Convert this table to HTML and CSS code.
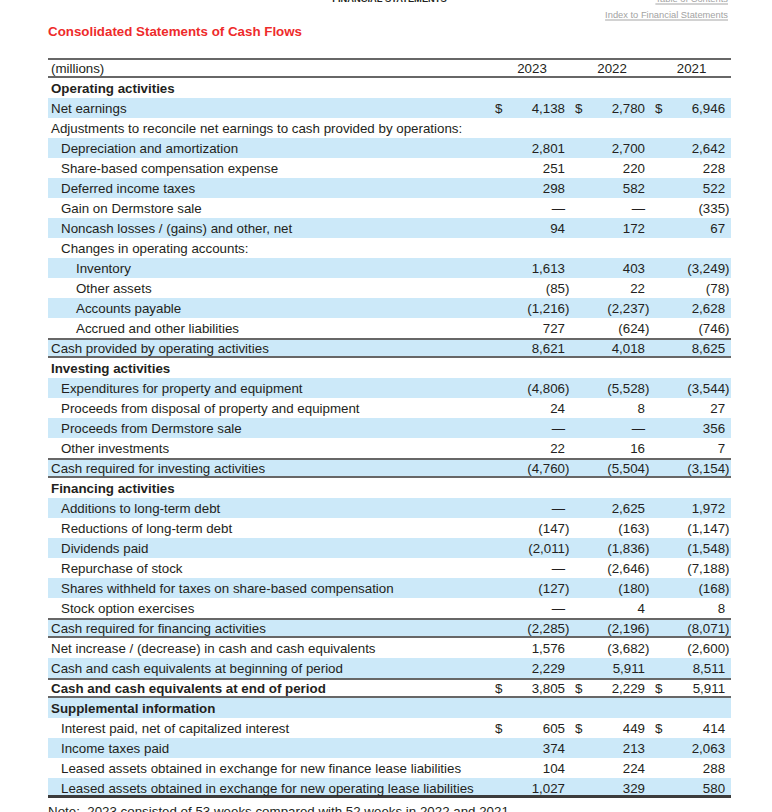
FILE: index.html
```html
<!DOCTYPE html>
<html lang="en">

<head>
  <meta charset="UTF-8">
  <meta name="viewport" content="width=device-width, initial-scale=1.0">
  <title>Consolidated Statements of Cash Flows</title>
  <link rel="stylesheet" href="styles.css">
</head>

<body>
  <div class="page">
    <!-- Running head with links back to the contents -->
    <header class="running-head">
      <div class="section-name">FINANCIAL STATEMENTS</div>
      <a class="doc-link toc-link" href="#">Table of Contents</a>
      <a class="doc-link index-link" href="#">Index to Financial Statements</a>
    </header>

    <h2 class="statement-title">Consolidated Statements of Cash Flows</h2>

    <table class="cash-flows">
      <colgroup>
        <col class="c-label">
        <col class="c-cur"><col class="c-num"><col class="c-par">
        <col class="c-cur"><col class="c-num"><col class="c-par">
        <col class="c-cur"><col class="c-num"><col class="c-par-last">
      </colgroup>
      <thead>
        <tr class="rule-both">
          <th class="lbl">(millions)</th>
          <th class="year" colspan="3">2023</th>
          <th class="year" colspan="3">2022</th>
          <th class="year" colspan="3">2021</th>
        </tr>
      </thead>
      <tbody>
        <!-- Operating activities -->
        <tr class="section">
          <td class="lbl">Operating activities</td>
          <td></td><td></td><td></td><td></td><td></td><td></td><td></td><td></td><td></td>
        </tr>
        <tr>
          <td class="lbl">Net earnings</td>
          <td class="cur">$</td><td class="num">4,138</td><td class="par"></td>
          <td class="cur">$</td><td class="num">2,780</td><td class="par"></td>
          <td class="cur">$</td><td class="num">6,946</td><td class="par"></td>
        </tr>
        <tr>
          <td class="lbl">Adjustments to reconcile net earnings to cash provided by operations:</td>
          <td></td><td></td><td></td><td></td><td></td><td></td><td></td><td></td><td></td>
        </tr>
        <tr>
          <td class="lbl ind1">Depreciation and amortization</td>
          <td class="cur"></td><td class="num">2,801</td><td class="par"></td>
          <td class="cur"></td><td class="num">2,700</td><td class="par"></td>
          <td class="cur"></td><td class="num">2,642</td><td class="par"></td>
        </tr>
        <tr>
          <td class="lbl ind1">Share-based compensation expense</td>
          <td class="cur"></td><td class="num">251</td><td class="par"></td>
          <td class="cur"></td><td class="num">220</td><td class="par"></td>
          <td class="cur"></td><td class="num">228</td><td class="par"></td>
        </tr>
        <tr>
          <td class="lbl ind1">Deferred income taxes</td>
          <td class="cur"></td><td class="num">298</td><td class="par"></td>
          <td class="cur"></td><td class="num">582</td><td class="par"></td>
          <td class="cur"></td><td class="num">522</td><td class="par"></td>
        </tr>
        <tr>
          <td class="lbl ind1">Gain on Dermstore sale</td>
          <td class="cur"></td><td class="num">—</td><td class="par"></td>
          <td class="cur"></td><td class="num">—</td><td class="par"></td>
          <td class="cur"></td><td class="num">(335</td><td class="par">)</td>
        </tr>
        <tr>
          <td class="lbl ind1">Noncash losses / (gains) and other, net</td>
          <td class="cur"></td><td class="num">94</td><td class="par"></td>
          <td class="cur"></td><td class="num">172</td><td class="par"></td>
          <td class="cur"></td><td class="num">67</td><td class="par"></td>
        </tr>
        <tr>
          <td class="lbl ind1">Changes in operating accounts:</td>
          <td></td><td></td><td></td><td></td><td></td><td></td><td></td><td></td><td></td>
        </tr>
        <tr>
          <td class="lbl ind2">Inventory</td>
          <td class="cur"></td><td class="num">1,613</td><td class="par"></td>
          <td class="cur"></td><td class="num">403</td><td class="par"></td>
          <td class="cur"></td><td class="num">(3,249</td><td class="par">)</td>
        </tr>
        <tr>
          <td class="lbl ind2">Other assets</td>
          <td class="cur"></td><td class="num">(85</td><td class="par">)</td>
          <td class="cur"></td><td class="num">22</td><td class="par"></td>
          <td class="cur"></td><td class="num">(78</td><td class="par">)</td>
        </tr>
        <tr>
          <td class="lbl ind2">Accounts payable</td>
          <td class="cur"></td><td class="num">(1,216</td><td class="par">)</td>
          <td class="cur"></td><td class="num">(2,237</td><td class="par">)</td>
          <td class="cur"></td><td class="num">2,628</td><td class="par"></td>
        </tr>
        <tr>
          <td class="lbl ind2">Accrued and other liabilities</td>
          <td class="cur"></td><td class="num">727</td><td class="par"></td>
          <td class="cur"></td><td class="num">(624</td><td class="par">)</td>
          <td class="cur"></td><td class="num">(746</td><td class="par">)</td>
        </tr>
        <tr class="rule-both">
          <td class="lbl">Cash provided by operating activities</td>
          <td class="cur"></td><td class="num">8,621</td><td class="par"></td>
          <td class="cur"></td><td class="num">4,018</td><td class="par"></td>
          <td class="cur"></td><td class="num">8,625</td><td class="par"></td>
        </tr>

        <!-- Investing activities -->
        <tr class="section">
          <td class="lbl">Investing activities</td>
          <td></td><td></td><td></td><td></td><td></td><td></td><td></td><td></td><td></td>
        </tr>
        <tr>
          <td class="lbl ind1">Expenditures for property and equipment</td>
          <td class="cur"></td><td class="num">(4,806</td><td class="par">)</td>
          <td class="cur"></td><td class="num">(5,528</td><td class="par">)</td>
          <td class="cur"></td><td class="num">(3,544</td><td class="par">)</td>
        </tr>
        <tr>
          <td class="lbl ind1">Proceeds from disposal of property and equipment</td>
          <td class="cur"></td><td class="num">24</td><td class="par"></td>
          <td class="cur"></td><td class="num">8</td><td class="par"></td>
          <td class="cur"></td><td class="num">27</td><td class="par"></td>
        </tr>
        <tr>
          <td class="lbl ind1">Proceeds from Dermstore sale</td>
          <td class="cur"></td><td class="num">—</td><td class="par"></td>
          <td class="cur"></td><td class="num">—</td><td class="par"></td>
          <td class="cur"></td><td class="num">356</td><td class="par"></td>
        </tr>
        <tr>
          <td class="lbl ind1">Other investments</td>
          <td class="cur"></td><td class="num">22</td><td class="par"></td>
          <td class="cur"></td><td class="num">16</td><td class="par"></td>
          <td class="cur"></td><td class="num">7</td><td class="par"></td>
        </tr>
        <tr class="rule-both">
          <td class="lbl">Cash required for investing activities</td>
          <td class="cur"></td><td class="num">(4,760</td><td class="par">)</td>
          <td class="cur"></td><td class="num">(5,504</td><td class="par">)</td>
          <td class="cur"></td><td class="num">(3,154</td><td class="par">)</td>
        </tr>

        <!-- Financing activities -->
        <tr class="section">
          <td class="lbl">Financing activities</td>
          <td></td><td></td><td></td><td></td><td></td><td></td><td></td><td></td><td></td>
        </tr>
        <tr>
          <td class="lbl ind1">Additions to long-term debt</td>
          <td class="cur"></td><td class="num">—</td><td class="par"></td>
          <td class="cur"></td><td class="num">2,625</td><td class="par"></td>
          <td class="cur"></td><td class="num">1,972</td><td class="par"></td>
        </tr>
        <tr>
          <td class="lbl ind1">Reductions of long-term debt</td>
          <td class="cur"></td><td class="num">(147</td><td class="par">)</td>
          <td class="cur"></td><td class="num">(163</td><td class="par">)</td>
          <td class="cur"></td><td class="num">(1,147</td><td class="par">)</td>
        </tr>
        <tr>
          <td class="lbl ind1">Dividends paid</td>
          <td class="cur"></td><td class="num">(2,011</td><td class="par">)</td>
          <td class="cur"></td><td class="num">(1,836</td><td class="par">)</td>
          <td class="cur"></td><td class="num">(1,548</td><td class="par">)</td>
        </tr>
        <tr>
          <td class="lbl ind1">Repurchase of stock</td>
          <td class="cur"></td><td class="num">—</td><td class="par"></td>
          <td class="cur"></td><td class="num">(2,646</td><td class="par">)</td>
          <td class="cur"></td><td class="num">(7,188</td><td class="par">)</td>
        </tr>
        <tr>
          <td class="lbl ind1">Shares withheld for taxes on share-based compensation</td>
          <td class="cur"></td><td class="num">(127</td><td class="par">)</td>
          <td class="cur"></td><td class="num">(180</td><td class="par">)</td>
          <td class="cur"></td><td class="num">(168</td><td class="par">)</td>
        </tr>
        <tr>
          <td class="lbl ind1">Stock option exercises</td>
          <td class="cur"></td><td class="num">—</td><td class="par"></td>
          <td class="cur"></td><td class="num">4</td><td class="par"></td>
          <td class="cur"></td><td class="num">8</td><td class="par"></td>
        </tr>
        <tr class="rule-both">
          <td class="lbl">Cash required for financing activities</td>
          <td class="cur"></td><td class="num">(2,285</td><td class="par">)</td>
          <td class="cur"></td><td class="num">(2,196</td><td class="par">)</td>
          <td class="cur"></td><td class="num">(8,071</td><td class="par">)</td>
        </tr>
        <tr>
          <td class="lbl">Net increase / (decrease) in cash and cash equivalents</td>
          <td class="cur"></td><td class="num">1,576</td><td class="par"></td>
          <td class="cur"></td><td class="num">(3,682</td><td class="par">)</td>
          <td class="cur"></td><td class="num">(2,600</td><td class="par">)</td>
        </tr>
        <tr>
          <td class="lbl">Cash and cash equivalents at beginning of period</td>
          <td class="cur"></td><td class="num">2,229</td><td class="par"></td>
          <td class="cur"></td><td class="num">5,911</td><td class="par"></td>
          <td class="cur"></td><td class="num">8,511</td><td class="par"></td>
        </tr>
        <tr class="rule-both total">
          <td class="lbl">Cash and cash equivalents at end of period</td>
          <td class="cur">$</td><td class="num">3,805</td><td class="par"></td>
          <td class="cur">$</td><td class="num">2,229</td><td class="par"></td>
          <td class="cur">$</td><td class="num">5,911</td><td class="par"></td>
        </tr>

        <!-- Supplemental information -->
        <tr class="section">
          <td class="lbl">Supplemental information</td>
          <td></td><td></td><td></td><td></td><td></td><td></td><td></td><td></td><td></td>
        </tr>
        <tr>
          <td class="lbl ind1">Interest paid, net of capitalized interest</td>
          <td class="cur">$</td><td class="num">605</td><td class="par"></td>
          <td class="cur">$</td><td class="num">449</td><td class="par"></td>
          <td class="cur">$</td><td class="num">414</td><td class="par"></td>
        </tr>
        <tr>
          <td class="lbl ind1">Income taxes paid</td>
          <td class="cur"></td><td class="num">374</td><td class="par"></td>
          <td class="cur"></td><td class="num">213</td><td class="par"></td>
          <td class="cur"></td><td class="num">2,063</td><td class="par"></td>
        </tr>
        <tr>
          <td class="lbl ind1">Leased assets obtained in exchange for new finance lease liabilities</td>
          <td class="cur"></td><td class="num">104</td><td class="par"></td>
          <td class="cur"></td><td class="num">224</td><td class="par"></td>
          <td class="cur"></td><td class="num">288</td><td class="par"></td>
        </tr>
        <tr class="rule-end">
          <td class="lbl ind1">Leased assets obtained in exchange for new operating lease liabilities</td>
          <td class="cur"></td><td class="num">1,027</td><td class="par"></td>
          <td class="cur"></td><td class="num">329</td><td class="par"></td>
          <td class="cur"></td><td class="num">580</td><td class="par"></td>
        </tr>
      </tbody>
    </table>

    <p class="note">Note:&nbsp; 2023 consisted of 53 weeks compared with 52 weeks in 2022 and 2021.</p>
  </div>
</body>

</html>
```

FILE: styles.css
```css
/* Base page: Arial-like text on white */
body {
  margin: 0;
  font-family: "Liberation Sans", Arial, sans-serif;
  color: #231f20;
  background: #fff;
}

/* Page content column */
.page {
  padding: 0 41px 0 48px;
}

/* Running head: section name in the middle, links on the right */
.running-head {
  display: grid;
  grid-template-columns: 1fr auto 1fr;
  row-gap: 4px;
  margin-top: -7px;
  font-size: 9.33px;
  line-height: 12px;
}

.section-name {
  grid-column: 2;
  grid-row: 1;
  font-weight: bold;
}

.doc-link {
  grid-column: 3;
  justify-self: end;
  margin-right: 3px;
  color: #a3a3a3;
  text-decoration: underline;
  text-decoration-color: #d2d2d2;
  text-decoration-thickness: 2px;
  text-underline-offset: 1px;
}

.toc-link {
  grid-row: 1;
}

.index-link {
  grid-row: 2;
}

/* Statement title */
.statement-title {
  margin: 3px 0 18px;
  font-size: 13.33px;
  line-height: 16px;
  font-weight: bold;
  color: #ee2b2b;
}

/* The statement table */
.cash-flows {
  width: 683px;
  border-collapse: collapse;
  table-layout: fixed;
  font-size: 13.33px;
  line-height: 19px;
}

.c-label {
  width: 444px;
}

.c-cur {
  width: 20px;
}

.c-num {
  width: 53px;
}

.c-par {
  width: 7px;
}

.c-par-last {
  width: 6px;
}

/* Rows are 20px: 1px top padding nudges the text onto the reference baseline */
.cash-flows th,
.cash-flows td {
  padding: 1px 0 0;
  white-space: nowrap;
  overflow: visible;
}

.cash-flows th {
  font-weight: normal;
}

.year {
  text-align: center;
}

/* Label indents */
.lbl {
  text-align: left;
  padding-left: 3px !important;
}

.ind1 {
  padding-left: 13px !important;
}

.ind2 {
  padding-left: 28px !important;
}

/* Number columns: dollar sign, figure, closing paren */
.cur {
  padding-left: 3px !important;
  text-align: left;
}

.num {
  text-align: right;
}

.par {
  text-align: left;
}

/* Banded rows */
.cash-flows tbody tr:nth-child(even) td {
  background: #cce9f9;
}

/* Section headings and grand total are bold */
.section .lbl,
.total .lbl {
  font-weight: bold;
}

/* Rules above and below subtotals */
.rule-both th,
.rule-both td {
  box-shadow: inset 0 2px 0 #676767, inset 0 -2px 0 #676767;
}

.rule-end td {
  box-shadow: inset 0 -3px 0 #3c3c3c;
}

/* Footnote under the table */
.note {
  margin: 6px 0 0;
  font-size: 13.33px;
  line-height: 16px;
}
```
